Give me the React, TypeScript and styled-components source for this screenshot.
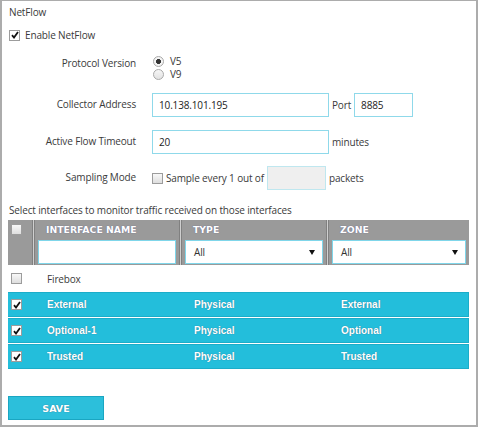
import styled, { createGlobalStyle } from 'styled-components';

const Global = createGlobalStyle`
  html, body { margin: 0; padding: 0; background: #fff; }
  body {
    font-family: "Open Sans", "Liberation Sans", sans-serif;
    font-size: 10px;
    letter-spacing: -0.15px;
    color: #3a3a3a;
  }
`;

const Frame = styled.div`
  box-sizing: border-box;
  width: 478px;
  height: 427px;
  border-top: 1px solid #acacac;
  border-left: 2px solid #acacac;
  border-right: 2px solid #acacac;
  border-bottom: 2px solid #acacac;
  padding: 3px 8px 0 6px;
  overflow: hidden;
`;

const Title = styled.div`
  line-height: 16px;
  padding-left: 1px;
`;

const InlineRow = styled.div<{ $top: number }>`
  display: flex;
  align-items: center;
  margin-top: ${p => p.$top}px;
  line-height: 16px;
  gap: 5px;
  padding-left: 1px;
`;

const FieldRow = styled.div<{ $top: number; $start?: boolean }>`
  display: flex;
  align-items: ${p => (p.$start ? 'flex-start' : 'center')};
  margin-top: ${p => p.$top}px;
  line-height: 16px;
`;

const Label = styled.div<{ $flat?: boolean }>`
  width: 128px;
  text-align: right;
  margin-right: 16px;
  margin-top: ${p => (p.$flat ? 0 : -2)}px;
`;

const Controls = styled.div`
  display: flex;
  align-items: center;
  gap: 3px;
`;

const RadioList = styled.div`
  display: flex;
  flex-direction: column;
  padding-left: 1px;
`;

const RadioItem = styled.div`
  display: flex;
  align-items: center;
  gap: 6px;
  height: 13px;
  line-height: 13px;
`;

const Radio = styled.span<{ $on?: boolean }>`
  box-sizing: border-box;
  width: 11px;
  height: 11px;
  border-radius: 50%;
  border: 1px solid #a9a9a9;
  background: ${p => (p.$on ? 'radial-gradient(circle, #333 0 2.2px, #f4f4f4 2.8px)' : 'linear-gradient(#f6f6f6, #e2e2e2)')};
`;

const TextInput = styled.div<{ $w: number; $grey?: boolean }>`
  box-sizing: border-box;
  width: ${p => p.$w}px;
  height: 24px;
  border: 1px solid ${p => (p.$grey ? '#bfe7ef' : '#8fd9ea')};
  background: ${p => (p.$grey ? '#efefef' : '#fff')};
  padding: 0 6px;
  line-height: 22px;
  color: #222;
`;

const Box = styled.span<{ $on?: boolean }>`
  box-sizing: border-box;
  flex: none;
  width: 11px;
  height: 11px;
  border: 1px solid #9c9c9c;
  background: ${p => (p.$on ? '#fff' : 'linear-gradient(#f8f8f8, #dedede)')};
  display: inline-flex;
  align-items: center;
  justify-content: center;
`;

const Note = styled.div`
  margin-top: 12px;
  line-height: 16px;
  padding-left: 1px;
`;

const Table = styled.div`
  margin-top: 2px;
  width: 461px;
`;

const HeadRow = styled.div`
  display: grid;
  grid-template-columns: 25px 146px 146px 1fr;
  column-gap: 1px;
  background: #cfcfcf;
`;

const HeadCell = styled.div`
  background: #9a9a9a;
  border-left: 1px solid #808080;
  border-right: 1px solid #808080;
  padding: 2px 3px 1px 3px;
  &:first-child { border-left: none; padding: 4px 0 0 3px; }
  &:last-child { border-right: none; }
`;

const HeadTitle = styled.div`
  height: 16px;
  line-height: 16px;
  padding-left: 8px;
  font-family: "DejaVu Sans", "Liberation Sans", sans-serif;
  font-weight: bold;
  font-size: 9.3px;
  color: #fff;
  text-shadow: 0 0 1px #5a5a8a;
  letter-spacing: 0;
`;

const Filter = styled.div`
  position: relative;
  box-sizing: border-box;
  margin-top: 2px;
  height: 24px;
  background: #fff;
  border: 1px solid #7fd6ea;
  padding: 0 8px;
  line-height: 22px;
  color: #333;
`;

const Arrow = styled.span`
  position: absolute;
  right: 7px;
  top: 9px;
  border-left: 3px solid transparent;
  border-right: 3px solid transparent;
  border-top: 5px solid #111;
`;

const DataRow = styled.div<{ $on?: boolean }>`
  box-sizing: border-box;
  display: grid;
  grid-template-columns: 25px 146px 146px 1fr;
  column-gap: 1px;
  align-items: center;
  height: 25px;
  margin-top: 1px;
  background: ${p => (p.$on ? '#23bedb' : '#fff')};
  border-top: 1px solid ${p => (p.$on ? '#1badc9' : 'transparent')};
  border-bottom: 1px solid ${p => (p.$on ? '#1badc9' : 'transparent')};
  border-right: 1px solid ${p => (p.$on ? '#1badc9' : 'transparent')};
`;

const DataCell = styled.div<{ $on?: boolean }>`
  padding-left: 13px;
  font-family: ${p => (p.$on ? '"Liberation Sans", Arial, sans-serif' : '"Open Sans", sans-serif')};
  font-weight: ${p => (p.$on ? 'bold' : 'normal')};
  font-size: 10px;
  letter-spacing: ${p => (p.$on ? 0 : -0.15)}px;
  color: ${p => (p.$on ? '#fff' : '#3a3a3a')};
  text-shadow: ${p => (p.$on ? '0 0 1px #2a6b88' : 'none')};
  &:first-child { padding-left: 3px; display: flex; }
`;

const SaveButton = styled.button`
  display: block;
  margin-top: 27px;
  width: 96px;
  height: 24px;
  background: #2cbfdb;
  border: 1px solid #1aa6c2;
  color: #fff;
  font-family: "DejaVu Sans", "Liberation Sans", sans-serif;
  font-weight: bold;
  font-size: 9.5px;
  text-shadow: 0 0 1px #2a6b88;
  padding: 0;
`;

function Check({ on }: { on?: boolean }) {
  return (
    <Box $on={on}>
      {on && (
        <svg width="8" height="8" viewBox="0 0 8 8">
          <path d="M1 4.2 L3 6.5 L7 1" fill="none" stroke="#111" strokeWidth="1.8" />
        </svg>
      )}
    </Box>
  );
}

const rows = [
  { name: 'External', type: 'Physical', zone: 'External' },
  { name: 'Optional-1', type: 'Physical', zone: 'Optional' },
  { name: 'Trusted', type: 'Physical', zone: 'Trusted' },
];

export default function App() {
  return (
    <>
      <Global />
      <Frame>
        <Title>NetFlow</Title>
        <InlineRow $top={7}>
          <Check on />
          <span>Enable NetFlow</span>
        </InlineRow>

        <FieldRow $top={12} $start>
          <Label $flat>Protocol Version</Label>
          <RadioList>
            <RadioItem><Radio $on /> <span>V5</span></RadioItem>
            <RadioItem><Radio /> <span>V9</span></RadioItem>
          </RadioList>
        </FieldRow>

        <FieldRow $top={12}>
          <Label>Collector Address</Label>
          <Controls>
            <TextInput $w={177}>10.138.101.195</TextInput>
            <span>Port</span>
            <TextInput $w={59}>8885</TextInput>
          </Controls>
        </FieldRow>

        <FieldRow $top={13}>
          <Label>Active Flow Timeout</Label>
          <Controls>
            <TextInput $w={177}>20</TextInput>
            <span>minutes</span>
          </Controls>
        </FieldRow>

        <FieldRow $top={12}>
          <Label>Sampling Mode</Label>
          <Controls>
            <Check />
            <span>Sample every 1 out of</span>
            <TextInput $w={59} $grey />
            <span>packets</span>
          </Controls>
        </FieldRow>

        <Note>Select interfaces to monitor traffic received on those interfaces</Note>

        <Table>
          <HeadRow>
            <HeadCell><Check /></HeadCell>
            <HeadCell>
              <HeadTitle>INTERFACE NAME</HeadTitle>
              <Filter />
            </HeadCell>
            <HeadCell>
              <HeadTitle>TYPE</HeadTitle>
              <Filter>All<Arrow /></Filter>
            </HeadCell>
            <HeadCell>
              <HeadTitle>ZONE</HeadTitle>
              <Filter>All<Arrow /></Filter>
            </HeadCell>
          </HeadRow>

          <DataRow>
            <DataCell><Check /></DataCell>
            <DataCell>Firebox</DataCell>
            <DataCell />
            <DataCell />
          </DataRow>
          {rows.map(r => (
            <DataRow key={r.name} $on>
              <DataCell $on><Check on /></DataCell>
              <DataCell $on>{r.name}</DataCell>
              <DataCell $on>{r.type}</DataCell>
              <DataCell $on>{r.zone}</DataCell>
            </DataRow>
          ))}
        </Table>

        <SaveButton>SAVE</SaveButton>
      </Frame>
    </>
  );
}
